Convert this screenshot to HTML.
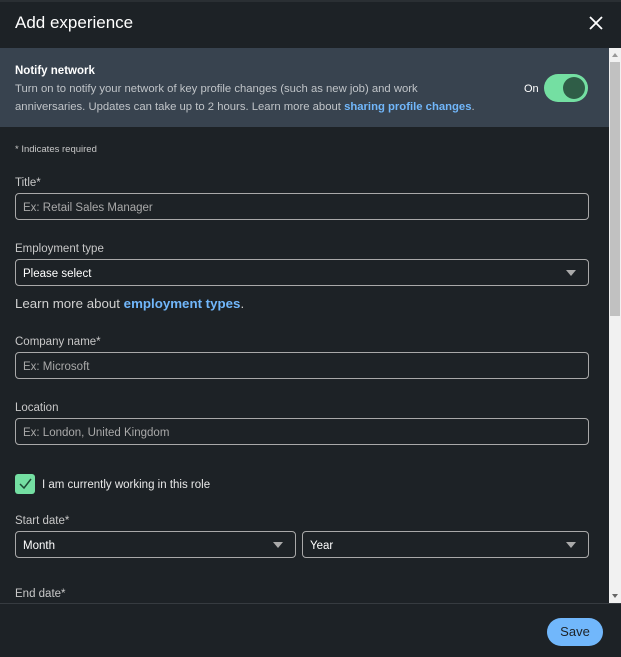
<!DOCTYPE html>
<html><head><style>
*{box-sizing:border-box;margin:0;padding:0}
body{width:621px;height:657px;background:#1d2226;font-family:"Liberation Sans",sans-serif;color:#e8e8e8;position:relative;overflow:hidden}
.abs{position:absolute}
.lbl{position:absolute;left:15px;font-size:11.5px;color:#c8c8c8}
.inp{position:absolute;left:15px;width:574px;height:27px;border:1px solid #a9a9a9;border-radius:4px;font-size:11.5px;color:#a9a9a9;padding:8px 7px 0}
.sel{color:#fff}
.arr{position:absolute;right:12px;top:10px;width:0;height:0;border-left:5px solid transparent;border-right:5px solid transparent;border-top:6px solid #aaa}
</style></head><body>
<div class="abs" style="left:0;top:0;width:621px;height:2px;background:#2a2f33"></div>
<div class="abs" style="left:15px;top:13px;font-size:17px;color:#fff">Add experience</div>
<svg class="abs" style="left:589px;top:16px" width="14" height="14"><path d="M1 1L13 13M13 1L1 13" stroke="#fff" stroke-width="1.8"/></svg>
<div class="abs" style="left:0;top:48px;width:609px;height:79px;background:#38434f"></div>
<div class="abs" style="left:15px;top:65px;font-size:11.5px;font-weight:bold;color:#fff">Notify network</div>
<div class="abs" style="left:15px;top:80px;width:500px;font-size:11.3px;line-height:18px;color:#c0c4c8;white-space:nowrap">Turn on to notify your network of key profile changes (such as new job) and work<br>anniversaries. Updates can take up to 2 hours. Learn more about <span style="color:#71b7fb;font-weight:bold">sharing profile changes</span>.</div>
<div class="abs" style="left:524px;top:83px;font-size:11px;color:#fff">On</div>
<div class="abs" style="left:544px;top:74px;width:44px;height:28px;border-radius:14px;background:#74dfa2"><div style="position:absolute;right:3px;top:3px;width:22px;height:22px;border-radius:11px;background:#2f5d47"></div></div>
<div class="abs" style="left:609px;top:48px;width:12px;height:555px;background:#f1f1f1"></div>
<div class="abs" style="left:610px;top:62px;width:10px;height:254px;background:#c1c1c1"></div>
<div class="abs" style="left:612px;top:53px;border-left:3px solid transparent;border-right:3px solid transparent;border-bottom:4px solid #999"></div>
<div class="abs" style="left:612px;top:594px;border-left:3px solid transparent;border-right:3px solid transparent;border-top:4px solid #666"></div>
<div class="lbl" style="top:144px;font-size:9.5px">* Indicates required</div>
<div class="lbl" style="top:177px">Title*</div>
<div class="inp" style="top:193px">Ex: Retail Sales Manager</div>
<div class="lbl" style="top:243px">Employment type</div>
<div class="inp sel" style="top:259px">Please select<div class="arr"></div></div>
<div class="lbl" style="top:296px;font-size:13.3px;color:#d0d0d0">Learn more about <span style="color:#71b7fb;font-weight:bold">employment types</span>.</div>
<div class="lbl" style="top:336px">Company name*</div>
<div class="inp" style="top:352px">Ex: Microsoft</div>
<div class="lbl" style="top:402px">Location</div>
<div class="inp" style="top:418px">Ex: London, United Kingdom</div>
<div class="abs" style="left:15px;top:474px;width:20px;height:20px;border-radius:3px;background:#74dfa2"></div>
<svg class="abs" style="left:15px;top:474px" width="20" height="20"><path d="M5 10L9 14L16 5" stroke="#1d4a35" stroke-width="1.5" fill="none"/></svg>
<div class="lbl" style="left:42px;top:479px;color:#e8e8e8">I am currently working in this role</div>
<div class="lbl" style="top:515px">Start date*</div>
<div class="inp sel" style="top:531px;width:281px">Month<div class="arr"></div></div>
<div class="inp sel" style="top:531px;left:302px;width:287px">Year<div class="arr"></div></div>
<div class="lbl" style="top:588px">End date*</div>
<div class="abs" style="left:0;top:603px;width:621px;height:1px;background:#363b40"></div>
<div class="abs" style="left:547px;top:618px;width:56px;height:28px;border-radius:14px;background:#71b7fb;color:#1d2226;font-size:13px;text-align:center;line-height:28px">Save</div>
</body></html>
